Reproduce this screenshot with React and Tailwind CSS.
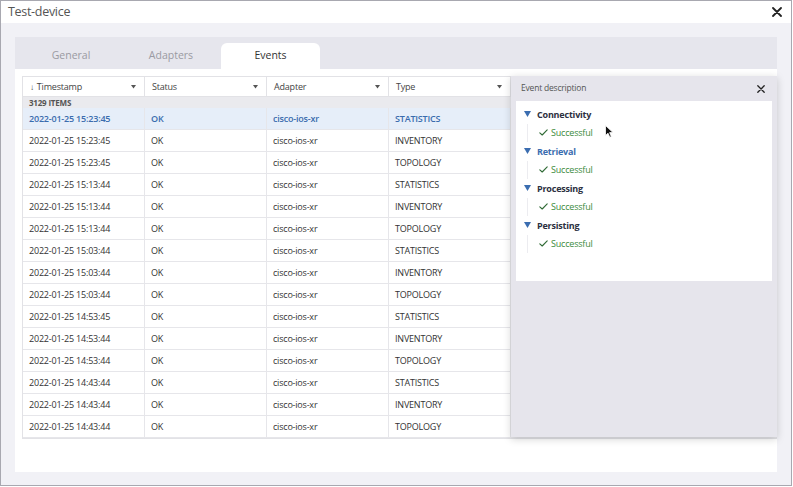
import React from "react";

const rows = [
  ["2022-01-25 15:23:45", "STATISTICS", true],
  ["2022-01-25 15:23:45", "INVENTORY"],
  ["2022-01-25 15:23:45", "TOPOLOGY"],
  ["2022-01-25 15:13:44", "STATISTICS"],
  ["2022-01-25 15:13:44", "INVENTORY"],
  ["2022-01-25 15:13:44", "TOPOLOGY"],
  ["2022-01-25 15:03:44", "STATISTICS"],
  ["2022-01-25 15:03:44", "INVENTORY"],
  ["2022-01-25 15:03:44", "TOPOLOGY"],
  ["2022-01-25 14:53:45", "STATISTICS"],
  ["2022-01-25 14:53:44", "INVENTORY"],
  ["2022-01-25 14:53:44", "TOPOLOGY"],
  ["2022-01-25 14:43:44", "STATISTICS"],
  ["2022-01-25 14:43:44", "INVENTORY"],
  ["2022-01-25 14:43:44", "TOPOLOGY"],
];

function Caret() {
  return (
    <svg width="5" height="4" viewBox="0 0 5 4" className="shrink-0">
      <path d="M0 0 L5 0 L2.5 3.5 Z" fill="#555" />
    </svg>
  );
}

function XIcon({ size = 10, stroke = 2 }) {
  return (
    <svg width={size} height={size} viewBox="0 0 10 10">
      <path d="M1 1 L9 9 M9 1 L1 9" stroke="#222" strokeWidth={stroke} strokeLinecap="round" />
    </svg>
  );
}

function Check() {
  return (
    <svg width="9" height="7" viewBox="0 0 9 7" className="shrink-0">
      <path d="M0.8 3.8 L3.2 6 L8.2 0.8" stroke="#2f6a35" strokeWidth="1.1" fill="none" strokeLinecap="round" strokeLinejoin="round" />
    </svg>
  );
}

function Tri() {
  return (
    <svg width="7" height="6" viewBox="0 0 7 6" className="shrink-0">
      <path d="M0 0 L7 0 L3.5 6 Z" fill="#3b6db0" />
    </svg>
  );
}

function HeaderCell({ children, last }) {
  return (
    <div className={`w-[122px] shrink-0 h-full flex items-center justify-between pl-[7px] pr-[8px] ${last ? "" : "border-r border-[#e2e2e6]"}`}>
      <span className="flex items-center">{children}</span>
      <Caret />
    </div>
  );
}

const treeItems = [
  ["Connectivity", false],
  ["Retrieval", true],
  ["Processing", false],
  ["Persisting", false],
];

export default function App() {
  return (
    <div className="w-[793px] h-[487px] bg-white" style={{ fontFamily: '"Open Sans", "Noto Sans", sans-serif' }}>
      <div className="w-[792px] h-[486px] border border-[#a8a8b0] flex flex-col">
        {/* title bar */}
        <div className="h-[22px] shrink-0 bg-white flex items-center justify-between pl-[7px] pr-[9px]">
          <span className="text-[12.5px] text-[#555] tracking-[-0.3px] leading-none">Test-device</span>
          <XIcon size={10} stroke={1.8} />
        </div>
        {/* body */}
        <div className="flex-1 bg-[#f1f1f6] px-[14px] pt-[14px] pb-[13px] flex flex-col">
          {/* tabs */}
          <div className="h-[32px] shrink-0 bg-[#e6e6ed] flex items-end pl-[6px]">
            <div className="w-[100px] h-[26px] flex items-center justify-center text-[10.5px] text-[#9a9aa2]">General</div>
            <div className="w-[100px] h-[26px] flex items-center justify-center text-[10.5px] text-[#9a9aa2]">Adapters</div>
            <div className="w-[99px] h-[26px] flex items-center justify-center text-[10.5px] text-[#333] bg-white rounded-t-[6px]">Events</div>
          </div>
          {/* content */}
          <div className="flex-1 bg-white relative pl-[7px] pr-[6px] pt-[7px]">
            <div className="w-[755px] border border-[#e2e2e6] text-[9px] tracking-[-0.2px] text-[#333]">
              <div className="h-[20px] flex items-center bg-white border-b border-[#e2e2e6] text-[#444]">
                <HeaderCell><span className="mr-[3px] text-[8px]">↓</span>Timestamp</HeaderCell>
                <HeaderCell>Status</HeaderCell>
                <HeaderCell>Adapter</HeaderCell>
                <HeaderCell>Type</HeaderCell>
              </div>
              <div className="h-[11px] bg-[#eaeaee] flex items-center pl-[6px] text-[8px] font-bold text-[#555]">3129 ITEMS</div>
              {rows.map(([ts, type, sel], i) => (
                <div
                  key={i}
                  className={`h-[22px] flex items-center border-b border-[#e6e6ea] ${sel ? "bg-[#e6eef9] text-[#3a6cae] font-semibold" : "bg-white"}`}
                >
                  <div className="w-[122px] shrink-0 h-full flex items-center pl-[6px] border-r border-[#e6e6ea]">{ts}</div>
                  <div className="w-[122px] shrink-0 h-full flex items-center pl-[6px] border-r border-[#e6e6ea]">OK</div>
                  <div className="w-[122px] shrink-0 h-full flex items-center pl-[6px] border-r border-[#e6e6ea]">cisco-ios-xr</div>
                  <div className="w-[122px] shrink-0 h-full flex items-center pl-[6px] border-r border-[#e6e6ea]">{type}</div>
                  <div className="flex-1" />
                </div>
              ))}
            </div>

            {/* event description panel */}
            <div className="absolute left-[496px] top-[7px] w-[266px] h-[361px] bg-[#e6e5ec] shadow-[0_2px_8px_rgba(0,0,0,0.18)] flex flex-col">
              <div className="h-[25px] shrink-0 flex items-center justify-between pl-[10px] pr-[12px]">
                <span className="text-[8.5px] text-[#555] tracking-[-0.2px]">Event description</span>
                <XIcon size={8} stroke={1.6} />
              </div>
              <div className="mx-[5px] h-[180px] bg-white pt-[4px] pl-[8px] text-[9px] tracking-[-0.2px]">
                {treeItems.map(([name, blue]) => (
                  <div key={name}>
                    <div className="h-[18.5px] flex items-center">
                      <Tri />
                      <span className={`ml-[6px] font-bold ${blue ? "text-[#3b6db0]" : "text-[#2c3040]"}`}>{name}</span>
                    </div>
                    <div className="h-[18.5px] flex items-center ml-[3px] border-l border-[#ececf0] pl-[11px]">
                      <Check />
                      <span className="ml-[3px] text-[#3b8a3b]">Successful</span>
                    </div>
                  </div>
                ))}
              </div>
            </div>

            {/* mouse cursor */}
            <svg className="absolute left-[590px] top-[56px]" width="9" height="13" viewBox="0 0 9 13">
              <path d="M0.5 0.5 L0.5 10.5 L3 8.2 L4.8 12.3 L6.3 11.6 L4.6 7.6 L8 7.6 Z" fill="#111" stroke="#fff" strokeWidth="0.8" />
            </svg>
          </div>
        </div>
      </div>
    </div>
  );
}
